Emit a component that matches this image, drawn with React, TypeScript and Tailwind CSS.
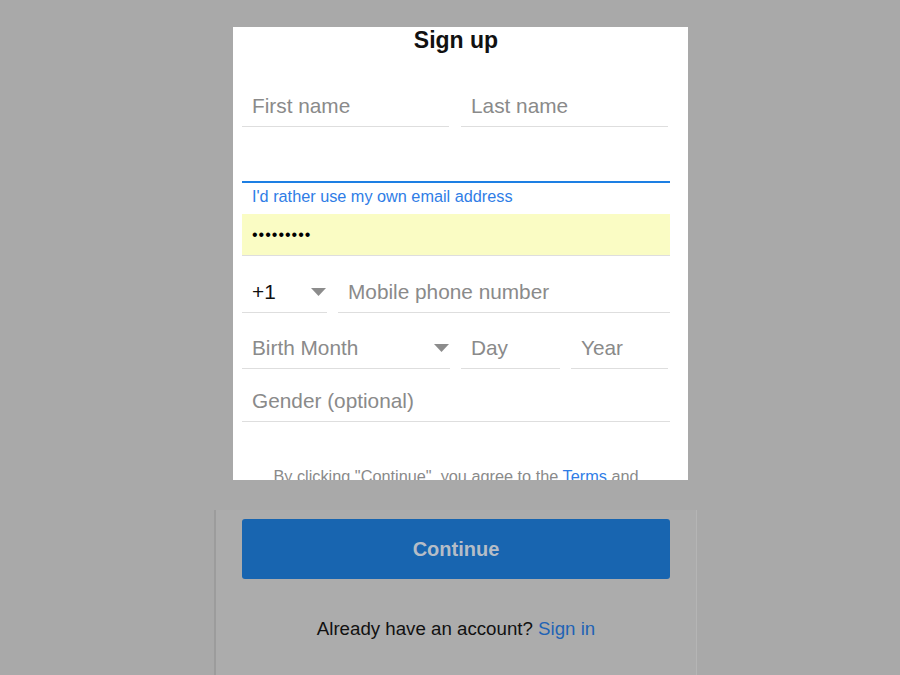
import React from 'react';

const font = 'font-["Liberation_Sans",Arial,sans-serif]';

const Caret: React.FC = () => (
  <svg width="15" height="8" viewBox="0 0 15 8" className="shrink-0">
    <path d="M0 0 L15 0 L7.5 8 Z" fill="#8c8c8c" />
  </svg>
);

const Field: React.FC<{ label: string; className?: string; caret?: boolean; dark?: boolean }> = ({
  label,
  className = '',
  caret,
  dark,
}) => (
  <div
    className={`flex h-[41px] items-center justify-between border-b border-[#dedede] pl-[10px] pr-[1px] ${className}`}
  >
    <span className={`text-[20.8px] ${dark ? 'text-[#111]' : 'text-[#8a8a8a]'}`}>{label}</span>
    {caret && <Caret />}
  </div>
);

const App: React.FC = () => {
  return (
    <div className={`flex h-[675px] w-[900px] flex-col overflow-hidden bg-[#a9a9a9] ${font}`}>
      {/* Sign up card (visible part) */}
      <div className="ml-[233px] mt-[27px] h-[453px] w-[455px] shrink-0 overflow-hidden bg-white pl-[9px] pr-[18px]">
        <h1 className="text-center text-[23px] font-bold leading-[26px] text-[#111]">Sign up</h1>

        <div className="mt-[33px] flex gap-[12px]">
          <Field label="First name" className="w-[207px]" />
          <Field label="Last name" className="w-[207px]" />
        </div>

        <div className="mt-[14px] h-[42px] border-b-2 border-[#1d7fe3]" />

        <a className="mt-[3px] block pl-[10px] text-[16.25px] leading-[20px] text-[#2f7de6]">
          I'd rather use my own email address
        </a>

        <div className="mt-[8px] flex h-[42px] items-center border-b border-[#dedede] bg-[#fafcc4] pl-[10px]">
          <span className="text-[16px] tracking-[1px] text-black">•••••••••</span>
        </div>

        <div className="mt-[16px] flex gap-[11px]">
          <Field label="+1" className="w-[85px]" caret dark />
          <Field label="Mobile phone number" className="flex-1" />
        </div>

        <div className="mt-[15px] flex gap-[11px]">
          <Field label="Birth Month" className="w-[208px]" caret />
          <Field label="Day" className="w-[99px]" />
          <Field label="Year" className="w-[97px]" />
        </div>

        <div className="mt-[12px]">
          <Field label="Gender (optional)" />
        </div>

        <p className="mt-[44px] text-center text-[16.3px] leading-[20px] text-[#8a8a8a]">
          By clicking "Continue", you agree to the <span className="text-[#2f7de6]">Terms</span> and
        </p>
      </div>

      {/* Dimmed lower part */}
      <div className="ml-[214px] mt-[30px] flex w-[483px] flex-1 flex-col border-l-2 border-r border-l-[#9c9c9c] border-r-[#b5b5b5] bg-[#acacac] pl-[26px] pt-[9px]">
        <button className="flex h-[60px] w-[428px] shrink-0 items-center justify-center rounded-[3px] bg-[#1865b0] text-[20px] font-bold text-[#b5bdc7]">
          Continue
        </button>
        <p className="mt-[36px] w-[428px] text-center text-[18.7px] text-[#111]">
          Already have an account? <span className="text-[#1f63b5]">Sign in</span>
        </p>
      </div>
    </div>
  );
};

export default App;
